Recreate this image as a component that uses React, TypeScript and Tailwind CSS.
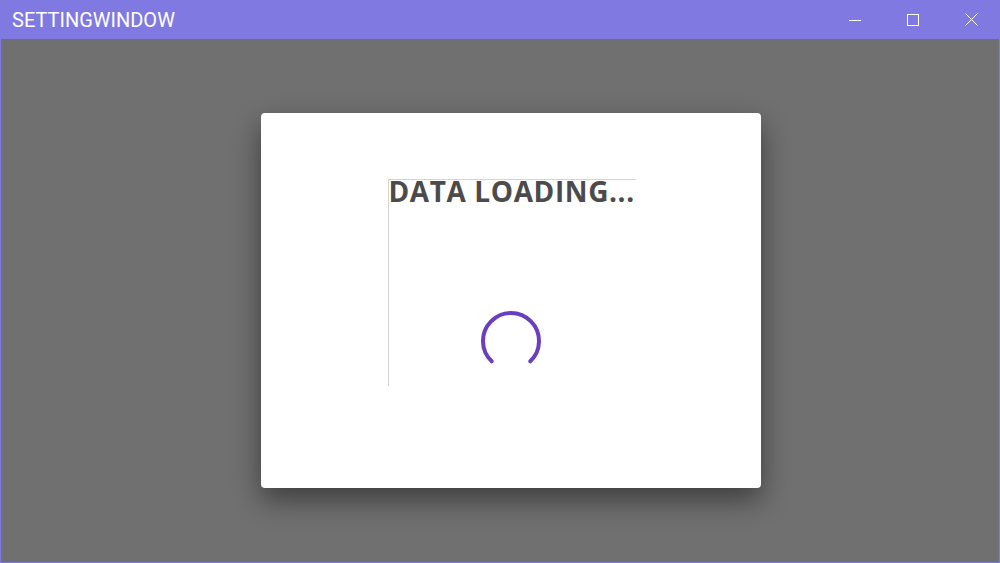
import React from "react";

export default function App() {
  return (
    <div className="flex h-[563px] w-[1000px] flex-col overflow-hidden bg-[#8179e2] font-['Roboto',sans-serif]">
      {/* Title bar */}
      <header className="flex h-[39px] shrink-0 items-center justify-between pl-3">
        <span className="text-[20px] leading-none text-white">SETTINGWINDOW</span>
        <div className="flex h-full items-center">
          <button className="flex h-full w-[58px] items-center justify-center">
            <svg width="12" height="12" viewBox="0 0 12 12">
              <path d="M0 6.5h12" stroke="white" strokeWidth="1" />
            </svg>
          </button>
          <button className="flex h-full w-[58px] items-center justify-center">
            <svg width="12" height="12" viewBox="0 0 12 12">
              <rect x="0.5" y="0.5" width="11" height="11" fill="none" stroke="white" strokeWidth="1" />
            </svg>
          </button>
          <button className="flex h-full w-[58px] items-center justify-center">
            <svg width="13" height="13" viewBox="0 0 13 13">
              <path d="M0.5 0.5l12 12M12.5 0.5l-12 12" stroke="white" strokeWidth="1" />
            </svg>
          </button>
        </div>
      </header>

      {/* Content */}
      <main className="mx-px mb-px flex flex-1 items-start bg-[#707070] pl-[260px] pt-[74px]">
        <div className="flex h-[375px] w-[500px] justify-center rounded-[4px] bg-white pl-[1px] pt-[66px] shadow-[0_12px_28px_rgba(0,0,0,0.45)]">
          <div className="flex h-[207px] w-[248px] flex-col border-l border-t border-[#d4d4d4]">
            <h1 className="whitespace-nowrap font-['Open_Sans',sans-serif] text-[28px] font-bold leading-[22px] tracking-[0.6px] text-[#4b4b4b]">
              DATA LOADING...
            </h1>
            <div className="flex justify-center pt-[107px] pr-[2px]">
              <svg width="64" height="64" viewBox="0 0 64 64">
                <path
                  d="M 12.7 52.3 A 28 28 0 1 1 51.3 52.3"
                  fill="none"
                  stroke="#6a3fbd"
                  strokeWidth="4"
                  strokeLinecap="round"
                />
              </svg>
            </div>
          </div>
        </div>
      </main>
    </div>
  );
}
